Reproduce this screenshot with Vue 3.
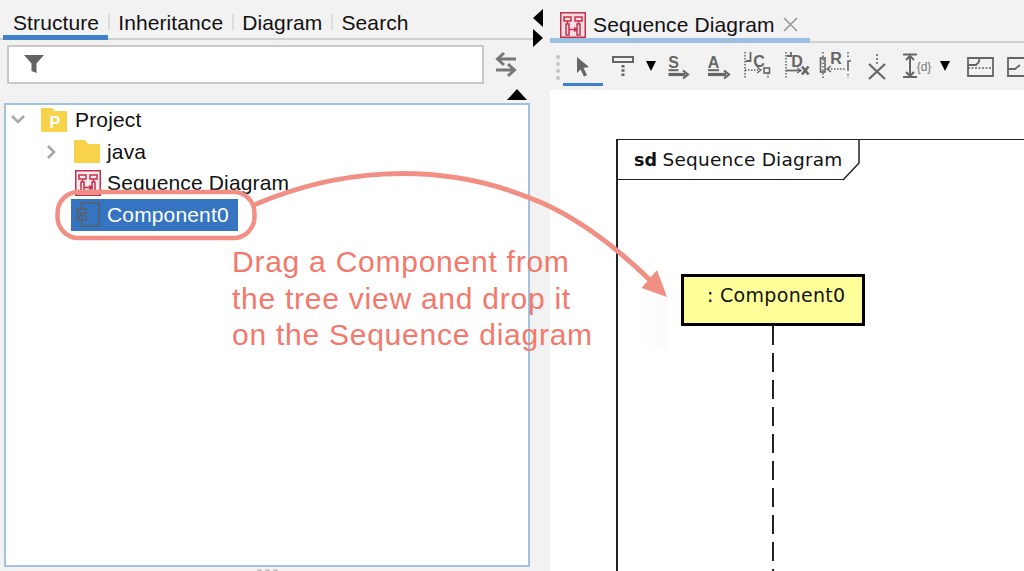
<script setup>
const tabs = ['Structure', 'Inheritance', 'Diagram', 'Search']
</script>

<template>
  <div class="app">
    <section class="left">
      <nav class="tabs">
        <span v-for="(t, i) in tabs" :key="t" class="tab" :class="{ active: i === 0 }">{{ t }}</span>
      </nav>
      <div class="filter-row">
        <div class="filter">
          <svg width="22" height="20" viewBox="0 0 22 20"><path d="M1 1h20l-7.500 8.500V19l-5-2V9.500z" fill="#636363"/></svg>
        </div>
        <svg class="swap" width="26" height="30" viewBox="0 0 26 30" fill="none" stroke="#777" stroke-width="3">
          <path d="M23 9H5M11 3 4.500 9l6.500 6"/>
          <path d="M3 20h18M15 14l6.500 6-6.500 6"/>
        </svg>
      </div>
      <div class="collapse-row"><span class="tri-up"></span></div>
      <div class="tree">
        <div class="row r0">
          <svg class="chev" width="16" height="12" viewBox="0 0 16 12" fill="none" stroke="#a8a8a8" stroke-width="2.600"><path d="m2 2 6 6 6-6"/></svg>
          <svg class="ic" width="26" height="24" viewBox="0 0 26 24"><path d="M0 0h11l3 3h12v21H0z" fill="#f8d24a"/><text x="14" y="20" class="p">P</text></svg>
          <span>Project</span>
        </div>
        <div class="row r1">
          <svg class="chev" width="12" height="16" viewBox="0 0 12 16" fill="none" stroke="#a8a8a8" stroke-width="2.600"><path d="m2 2 6 6-6 6"/></svg>
          <svg class="ic" width="26" height="23" viewBox="0 0 26 23"><path d="M0 0h11l3 4h12v19H0z" fill="#f8d24a"/></svg>
          <span>java</span>
        </div>
        <div class="row r2">
          <svg class="ic" width="26" height="26" viewBox="0 0 26 26" fill="none" stroke="#c5304e" stroke-width="1.500">
            <rect x=".75" y=".75" width="24.500" height="24.500" fill="#fbe9ec"/>
            <path d="M4 5h7v4H4zM15 5h7v4h-7zM7.500 9v3M18.500 9v3M6 12h3v11H6zM17 12h3v11h-3zM9 17.500h8M14 15.500l3 2-3 2"/>
          </svg>
          <span>Sequence Diagram</span>
        </div>
        <div class="row r3">
          <div class="sel">
            <svg width="24" height="25" viewBox="0 0 24 25" fill="none" stroke="#5b5f66" stroke-width="1.500">
              <path d="M5.500 1H23v23H5.500z"/>
              <path d="M1 7h9v4H1zM1 14h9v4H1z" fill="#3574c1"/>
            </svg>
            <span>Component0</span>
          </div>
        </div>
      </div>
      <div class="grip"><i></i><i></i><i></i></div>
    </section>

    <section class="right">
      <div class="head">
        <div class="arrows"><span class="tl"></span><span class="tr"></span></div>
        <div class="doc-tab">
          <svg width="26" height="26" viewBox="0 0 26 26" fill="none" stroke="#c5304e" stroke-width="1.500">
            <rect x=".75" y=".75" width="24.500" height="24.500" fill="#f9dfe4"/>
            <path d="M4 5h7v4H4zM15 5h7v4h-7zM7.500 9v3M18.500 9v3M6 12h3v11H6zM17 12h3v11h-3zM9 17.500h8M14 15.500l3 2-3 2"/>
          </svg>
          <span class="doc-title">Sequence Diagram</span>
          <svg width="15" height="15" viewBox="0 0 15 15" stroke="#999" stroke-width="1.600"><path d="m1 1 13 13M14 1 1 14"/></svg>
        </div>
      </div>

      <div class="toolbar">
        <span class="tool-grip"><i></i><i></i><i></i><i></i></span>
        <div class="tool active first">
          <svg width="40" height="38" viewBox="0 0 40 38"><path d="M14 12 26 22l-5.500 1L24 30l-3 1.500-3.500-7L14 28z" fill="#666"/></svg>
        </div>
        <div class="tool first">
          <svg width="40" height="38" viewBox="0 0 40 38" fill="none" stroke="#666"><rect x="10" y="12" width="20" height="5" stroke-width="2"/><path d="M20 20v11" stroke-width="3" stroke-dasharray="2.500 1.800"/></svg>
        </div>
        <span class="dd"></span>
        <div class="tool">
          <svg width="40" height="38" viewBox="0 0 40 38" fill="none" stroke="#666"><text x="14.500" y="23" class="tl-s">S</text><path d="M9.500 25.200h10" stroke-width="2"/><path d="M9.500 29.500h17" stroke-width="3.200"/><path d="m24 25.500 5 4-5 4" stroke-width="2.200"/></svg>
        </div>
        <div class="tool">
          <svg width="40" height="38" viewBox="0 0 40 38" fill="none" stroke="#666"><text x="14.500" y="23" class="tl-s">A</text><path d="M9 25.200h11" stroke-width="2"/><path d="M9 29.500h18" stroke-width="3.200"/><path d="m25 25.500 5 4-5 4" stroke-width="2.200"/></svg>
        </div>
        <div class="tool">
          <svg width="40" height="38" viewBox="0 0 40 38" fill="none" stroke="#666"><path d="M7 7v26M30 28v5M7 25h15" stroke-width="1.600" stroke-dasharray="1.500 1.500"/><path d="M12.500 7v9H8" stroke-width="1.800"/><text x="21" y="21.500" class="tl-s">C</text><path d="m19 22 4 3-4 3" stroke-width="1.300"/><rect x="26" y="23" width="5.500" height="5" stroke-width="1.600"/></svg>
        </div>
        <div class="tool">
          <svg width="40" height="38" viewBox="0 0 40 38" fill="none" stroke="#666"><path d="M8 7v26" stroke-width="1.600" stroke-dasharray="1.500 1.500"/><path d="M13 7v4H9" stroke-width="1.800"/><text x="19" y="21.500" class="tl-s">D</text><path d="M8 25.500h15" stroke-width="1.800"/><path d="m24 21.500 6.500 8M30.500 21.500l-6.500 8" stroke-width="2.600"/><path d="m19 23 4 2.500-4 2.500" stroke-width="1.300"/></svg>
        </div>
        <div class="tool">
          <svg width="40" height="38" viewBox="0 0 40 38" fill="none" stroke="#666"><path d="M6 7v26M31 7v6M31 29v4" stroke-width="1.600" stroke-dasharray="1.500 2"/><rect x="3.500" y="13" width="4.500" height="14" stroke-width="1.600"/><text x="19" y="19" class="tl-s">R</text><path d="M11 24h17" stroke-width="1.300" stroke-dasharray="1.500 1.500"/><path d="m14 21-4 3 4 3" stroke-width="1.300"/><path d="M34 16h-3v10" stroke-width="1.600"/></svg>
        </div>
        <div class="tool">
          <svg width="40" height="38" viewBox="0 0 40 38" fill="none" stroke="#666"><path d="M20 9v11" stroke-width="1.600" stroke-dasharray="2 2"/><path d="m12 19 16 15M28 19 12 34" stroke-width="2.200"/></svg>
        </div>
        <div class="tool">
          <svg width="40" height="38" viewBox="0 0 40 38" fill="none" stroke="#666"><path d="M7 9.500h14M7 32h14M14 11v20" stroke-width="2"/><path d="m10 15 4-4 4 4M10 27l4 4 4-4" stroke-width="2"/><text x="28" y="26" class="tl-d">{d}</text></svg>
        </div>
        <span class="dd dd2"></span>
        <svg class="frame-ic" width="27" height="20" viewBox="0 0 27 20" fill="none" stroke="#666" stroke-width="1.800"><path d="M1 1h25v18H1zM1 8h8l3-3V1"/><path d="M1 11h25" stroke-dasharray="2 1.500" stroke-width="1.400"/></svg>
        <svg class="frame-ic2" width="27" height="20" viewBox="0 0 27 20" fill="none" stroke="#666" stroke-width="1.800"><path d="M17 19H1V1h25M1 12h7l5-4"/></svg>
      </div>

      <div class="canvas">
        <div class="smudge"></div>
        <div class="frame">
          <div class="frame-label">
            <b>sd</b> <span class="frame-name">Sequence Diagram</span>
            <svg class="notch" width="18" height="41" viewBox="0 0 18 41" fill="none" stroke="#222" stroke-width="1.500"><path d="M17 0v23L1 40"/></svg>
          </div>
        </div>
        <div class="life-box"><span>: Component0</span></div>
        <div class="lifeline"></div>
      </div>
    </section>

    <svg class="mark" width="1024" height="571" viewBox="0 0 1024 571" fill="none">
      <rect x="57.500" y="192" width="197" height="46" rx="21" stroke="#f28f85" stroke-width="4.500"/>
      <path d="M254 205C330 172 430 158 530 198c40 15 80 43 122 84" stroke="#f28f85" stroke-width="5"/>
      <path d="M667 297 641.500 288 657 270z" fill="#f28f85"/>
    </svg>
    <div class="note">
      <div>Drag a Component from</div>
      <div>the tree view and drop it</div>
      <div>on the Sequence diagram</div>
    </div>
  </div>
</template>

<style>
html, body { margin: 0; overflow: hidden; }
</style>

<style scoped>
.app {
  position: relative;
  display: flex;
  width: 1024px;
  height: 571px;
  overflow: hidden;
  background: #f2f2f2;
  font-family: "Liberation Sans", Arial, sans-serif;
  color: #111;
}
.left { width: 550px; flex: none; display: flex; flex-direction: column; }
.tabs {
  display: flex;
  flex: none;
  height: 38px;
  margin-right: 16px;
  border-bottom: 2px solid #cfcfcf;
  padding-left: 3px;
}
.tab {
  position: relative;
  font-size: 21px;
  letter-spacing: .1px;
  line-height: 45px;
  height: 38px;
  padding: 0 9.100px 0 10px;
}
.tab + .tab::before {
  content: "";
  position: absolute;
  left: 0;
  top: 14px;
  height: 16px;
  width: 2px;
  background: #dcdcdc;
}
.tab.active { border-bottom: 5px solid #3f81c6; height: 35px; margin-bottom: -2px; }
.filter-row { display: flex; flex: none; align-items: center; height: 42px; padding-left: 7px; margin-top: 3px; }
.filter {
  box-sizing: border-box;
  width: 477px;
  height: 39px;
  background: #fff;
  border: 2px solid #c9c9c9;
  display: flex;
  align-items: center;
  padding-left: 14px;
}
.swap { margin-left: 9px; margin-top: 1px; }
.collapse-row { flex: none; height: 18px; display: flex; justify-content: flex-end; padding-right: 23px; box-sizing: border-box; padding-top: 4px; }
.tri-up { width: 0; height: 0; border: 10px solid transparent; border-top: 0; border-bottom: 11px solid #000; }
.tree {
  box-sizing: border-box;
  flex: none;
  margin-left: 4px;
  width: 526px;
  height: 464px;
  background: #fff;
  border: 2px solid #a3c2e2;
  font-size: 21px;
  letter-spacing: .15px;
}
.row { height: 31.700px; display: flex; align-items: center; white-space: nowrap; }
.r0 { padding-left: 4px; margin-top: -1px; }
.r0 .ic { margin-left: 15px; margin-right: 8px; }
.r1 { padding-left: 40px; }
.r1 .ic { margin-left: 16px; margin-right: 7px; }
.r2 { padding-left: 69px; }
.r2 .ic { margin-right: 6px; }
.r3 { padding-left: 65px; }
.sel {
  display: flex;
  align-items: center;
  box-sizing: border-box;
  width: 167px;
  height: 32px;
  background: #3574c1;
  color: #fff;
  padding-left: 5px;
  gap: 7px;
}
.p { font: bold 16px "Liberation Sans", sans-serif; fill: #fff; text-anchor: middle; }
.grip { display: flex; gap: 3px; justify-content: center; width: 534px; margin-top: 2px; }
.grip i { width: 5px; height: 5px; border-radius: 50%; background: #bdbdbd; display: block; }

.right { flex: 1; display: flex; flex-direction: column; min-width: 0; position: relative; }
.head { height: 45px; display: flex; flex: none; position: relative; }
.head::after { content: ""; position: absolute; left: 0; right: 0; top: 41px; height: 2px; background: #cfcfcf; }
.arrows { position: absolute; left: -17px; top: 9px; display: flex; flex-direction: column; gap: 2px; z-index: 2; }
.tl { width: 0; height: 0; border: 9px solid transparent; border-left: 0; border-right: 10px solid #000; }
.tr { width: 0; height: 0; border: 9px solid transparent; border-right: 0; border-left: 10px solid #000; }
.doc-tab {
  position: relative;
  z-index: 1;
  width: 260px;
  height: 38px;
  display: flex;
  align-items: center;
  border-bottom: 5px solid #9bbfe0;
}
.doc-tab > svg:first-child { margin-left: 10px; margin-top: 12px; }
.doc-title { font-size: 21px; letter-spacing: .12px; margin-left: 7px; margin-top: 12px; white-space: nowrap; }
.doc-tab > svg:last-child { margin-left: 8px; margin-top: 11px; }
.toolbar { height: 45px; flex: none; display: flex; align-items: flex-start; position: relative; }
.tool-grip { display: flex; flex-direction: column; gap: 3px; margin: 10px 3px 0 6px; width: 5px; }
.tool-grip i { width: 4px; height: 4px; border-radius: 50%; background: #c4c4c4; display: block; }
.tool { width: 39.500px; height: 38px; flex: none; }
.tool.first { width: 40px; }
.tool.active { border-bottom: 3px solid #3f81c6; }
.tool svg { display: block; }
.dd { width: 0; height: 0; border-left: 5px solid transparent; border-right: 5px solid transparent; border-top: 10px solid #000; margin: 16px 3px 0; flex: none; }
.dd2 { margin-left: 4px; }
.tl-s { font: bold 16px "Liberation Sans", sans-serif; fill: #666; stroke: none; text-anchor: middle; }
.tl-d { font: 12px "Liberation Sans", sans-serif; fill: #777; stroke: none; text-anchor: middle; }
.frame-ic { margin: 12px 0 0 14px; flex: none; }
.frame-ic2 { margin: 12px 0 0 13px; flex: none; }

.canvas { flex: 1; position: relative; background: #fff; overflow: hidden; font-family: "DejaVu Sans", sans-serif; }
.frame {
  position: absolute;
  left: 66px;
  top: 49px;
  right: -10px;
  bottom: -10px;
  border-style: solid;
  border-color: #222;
  border-width: 1.500px 0 0 2px;
}
.frame-label {
  position: relative;
  box-sizing: border-box;
  width: 225px;
  height: 40px;
  border-bottom: 1.500px solid #222;
  padding: 9px 0 0 16px;
  font-size: 17.500px;
  line-height: 22px;
  color: #111;
  white-space: nowrap;
}
.frame-name { font-size: 18.500px; letter-spacing: .22px; }
.notch { position: absolute; left: 224px; top: 0; }
.life-box {
  position: absolute;
  left: 131px;
  top: 184px;
  box-sizing: border-box;
  width: 184px;
  height: 52px;
  background: #ffff99;
  border: 3px solid #000;
  font-size: 19px;
  letter-spacing: .3px;
  padding: 7px 0 0 23px;
  color: #111;
  white-space: nowrap;
}
.lifeline {
  position: absolute;
  left: 222px;
  top: 236px;
  height: 260px;
  width: 2px;
  background: repeating-linear-gradient(#222 0 19px, transparent 19px 27px);
}
.smudge {
  position: absolute;
  left: 88px;
  top: 205px;
  width: 30px;
  height: 55px;
  background: linear-gradient(90deg, transparent, #fafafa);
}
.mark { position: absolute; left: 0; top: 0; pointer-events: none; }
.note {
  position: absolute;
  left: 232px;
  top: 244px;
  font-size: 30px;
  letter-spacing: .75px;
  line-height: 36.500px;
  color: #f4786b;
  white-space: nowrap;
  pointer-events: none;
}
</style>
